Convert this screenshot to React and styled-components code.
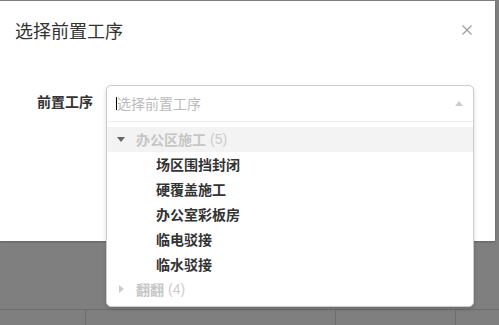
import React from 'react';
import styled, { createGlobalStyle } from 'styled-components';

const GlobalStyle = createGlobalStyle`
  html, body {
    margin: 0;
    padding: 0;
    background: #7f7f7f;
  }
  body {
    font-family: "Liberation Sans", "Noto Sans CJK SC", sans-serif;
  }
`;

const Page = styled.div`
  width: 499px;
  height: 325px;
  overflow: hidden;
  display: flex;
  flex-direction: column;
  padding-top: 1px;
  box-sizing: border-box;
  background: #7f7f7f;
`;

const Modal = styled.div`
  width: 495px;
  height: 240px;
  flex-shrink: 0;
  background: #fff;
  box-shadow: 0 1px 2px rgba(0, 0, 0, 0.25);
  display: flex;
  flex-direction: column;
  position: relative;
  z-index: 2;
`;

const Header = styled.div`
  height: 62px;
  display: flex;
  align-items: center;
  justify-content: space-between;
  padding: 0 23px 0 15px;
`;

const Title = styled.h4`
  margin: 0;
  font-size: 18px;
  font-weight: normal;
  color: #333;
  line-height: 24px;
`;

const Close = styled.button`
  border: none;
  background: none;
  padding: 0;
  width: 10px;
  height: 10px;
  margin-top: -5px;
  display: flex;
  cursor: pointer;
`;

const Body = styled.div`
  padding: 22px 15px 0;
`;

const FormRow = styled.div`
  display: flex;
  align-items: flex-start;
  gap: 13px;
`;

const Label = styled.label`
  width: 78px;
  height: 37px;
  line-height: 34px;
  text-align: right;
  font-size: 14px;
  font-weight: bold;
  color: #333;
`;

const SelectWrap = styled.div`
  position: relative;
  width: 368px;
  height: 37px;
`;

const Dropdown = styled.div`
  position: absolute;
  top: 0;
  left: 0;
  width: 368px;
  box-sizing: border-box;
  border: 1px solid #ccc;
  border-radius: 5px;
  background: #fff;
  box-shadow: 0 2px 4px rgba(0, 0, 0, 0.15);
`;

const Search = styled.div`
  height: 36px;
  box-sizing: border-box;
  display: flex;
  align-items: center;
  padding: 0 10px 2px 9px;
  border-bottom: 1px solid #eee;
`;

const Caret = styled.span`
  width: 1px;
  height: 13px;
  background: #000;
  margin-top: 2px;
`;

const Placeholder = styled.span`
  flex: 1;
  font-size: 14px;
  color: #bbb;
`;

const Arrow = styled.span`
  width: 0;
  height: 0;
  margin-top: 2px;
  border-left: 4px solid transparent;
  border-right: 4px solid transparent;
  border-bottom: 5px solid #ccc;
`;

const List = styled.ul`
  list-style: none;
  margin: 0;
  padding: 5px 0 4px;
`;

const Row = styled.li`
  height: 25px;
  box-sizing: border-box;
  display: flex;
  align-items: center;
  font-size: 14px;
  padding-left: ${p => p.$indent}px;
  padding-bottom: 2px;
  background: ${p => (p.$active ? '#f3f3f3' : 'transparent')};
`;

const Toggle = styled.span`
  width: 19px;
  display: flex;
  align-items: center;
  margin-top: 1px;
`;

const Down = styled.span`
  width: 0;
  height: 0;
  border-left: 4px solid transparent;
  border-right: 4px solid transparent;
  border-top: 5px solid #666;
`;

const Right = styled.span`
  width: 0;
  height: 0;
  margin-left: 2px;
  border-top: 4px solid transparent;
  border-bottom: 4px solid transparent;
  border-left: 5px solid #ccc;
`;

const GroupName = styled.span`
  font-weight: bold;
  color: #c6c6c6;
`;

const Count = styled.span`
  color: #ccc;
  margin-left: 4px;
`;

const Item = styled.span`
  font-weight: bold;
  color: #333;
`;

const Backdrop = styled.div`
  flex: 1;
  display: flex;
  flex-direction: column;
  justify-content: flex-end;
`;

const TableRow = styled.div`
  height: 15px;
  border-top: 1px solid #6e6e6e;
  display: flex;
`;

const Cell = styled.div`
  width: ${p => p.$w}px;
  flex-shrink: 0;
  border-right: 1px solid #6e6e6e;
`;

const groups = [
  {
    name: '办公区施工',
    count: 5,
    open: true,
    items: ['场区围挡封闭', '硬覆盖施工', '办公室彩板房', '临电驳接', '临水驳接'],
  },
  { name: '翻翻', count: 4, open: false, items: [] },
];

export default function App() {
  return (
    <>
      <GlobalStyle />
      <Page>
        <Modal>
          <Header>
            <Title>选择前置工序</Title>
            <Close aria-label="关闭">
              <svg width="10" height="10" viewBox="0 0 10 10">
                <path d="M0.5 0.5 L9.5 9.5 M9.5 0.5 L0.5 9.5" stroke="#999" strokeWidth="1.1" fill="none" />
              </svg>
            </Close>
          </Header>
          <Body>
            <FormRow>
              <Label>前置工序</Label>
              <SelectWrap>
                <Dropdown>
                  <Search>
                    <Caret />
                    <Placeholder>选择前置工序</Placeholder>
                    <Arrow />
                  </Search>
                  <List>
                    {groups.map((g, i) => (
                      <React.Fragment key={g.name}>
                        <Row $indent={10} $active={i === 0}>
                          <Toggle>{g.open ? <Down /> : <Right />}</Toggle>
                          <GroupName>{g.name}</GroupName>
                          <Count>({g.count})</Count>
                        </Row>
                        {g.open &&
                          g.items.map(it => (
                            <Row key={it} $indent={49}>
                              <Item>{it}</Item>
                            </Row>
                          ))}
                      </React.Fragment>
                    ))}
                  </List>
                </Dropdown>
              </SelectWrap>
            </FormRow>
          </Body>
        </Modal>
        <Backdrop>
          <TableRow>
            <Cell $w={85} />
            <Cell $w={249} />
            <Cell $w={119} />
          </TableRow>
        </Backdrop>
      </Page>
    </>
  );
}
